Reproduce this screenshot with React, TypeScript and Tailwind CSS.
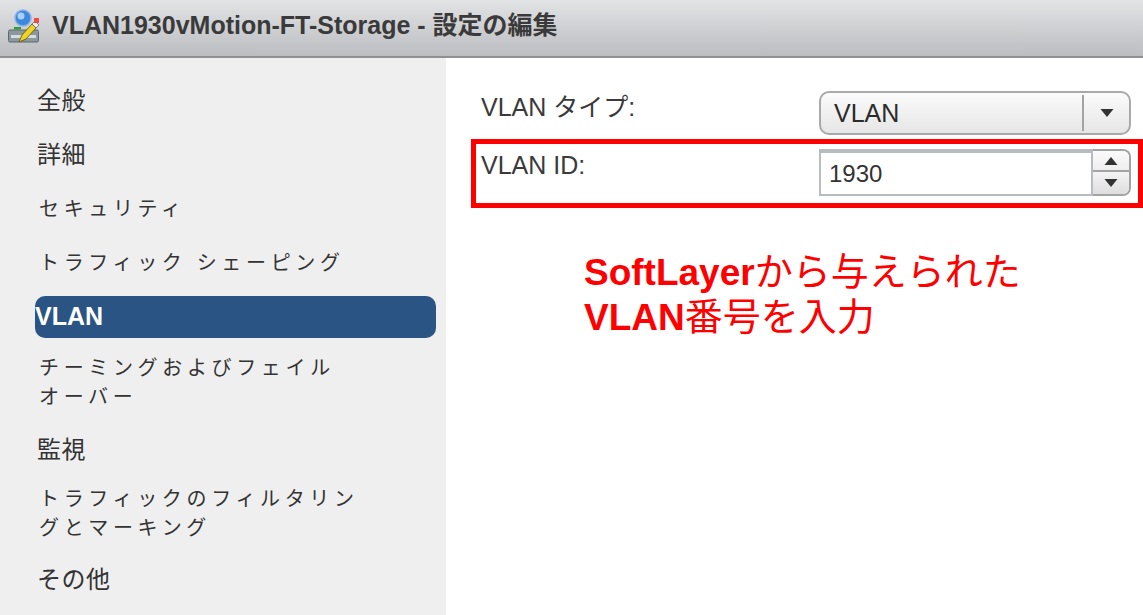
const jp = "font-['Liberation_Sans','Noto_Sans_CJK_JP',sans-serif]";

function Arrow({ up = false, className = "" }: { up?: boolean; className?: string }) {
  return (
    <svg width="14" height="10" viewBox="0 0 14 10" className={className}>
      <path d={up ? "M7 1 L13.5 9 L0.5 9 Z" : "M0.5 1 L13.5 1 L7 9 Z"} fill="#333" />
    </svg>
  );
}

function NetworkIcon() {
  return (
    <svg width="32" height="36" viewBox="0 0 32 36">
      <rect x="0.5" y="22" width="30" height="12" rx="1.5" fill="#8d979e" stroke="#5d686f" />
      <rect x="3" y="27" width="25" height="3" fill="#d7dcdf" />
      <rect x="6" y="19" width="7" height="2.5" fill="#2f9a3a" />
      <circle cx="15" cy="10" r="8" fill="#3f86df" stroke="#8ab4e6" strokeWidth="1.5" />
      <circle cx="13" cy="8" r="3.5" fill="#a9d0f7" />
      <path d="M11 34 L14 27 L24 16 L28 20 L18 31 Z" fill="#f0d320" stroke="#5b5310" strokeWidth="0.8" />
      <path d="M24 16 L27 13 L31 17 L28 20 Z" fill="#e9e9e9" stroke="#444" strokeWidth="0.6" />
      <rect x="26" y="10" width="5" height="5" fill="#ef4b4b" />
    </svg>
  );
}

function SideItem({ children, big = false, className = "" }: { children: React.ReactNode; big?: boolean; className?: string }) {
  return (
    <div
      className={`flex items-center ${big ? "pl-[2px] text-[24px] tracking-[0.5px]" : "pl-[4px] pt-[2px] text-[20px] tracking-[4.65px]"} text-[#333] ${className}`}
    >
      <span className="leading-[29px]">{children}</span>
    </div>
  );
}

export default function App() {
  return (
    <div className={`h-[615px] w-[1143px] overflow-hidden bg-white ${jp}`}>
      <header className="flex h-[58px] items-center gap-[12px] border-b-2 border-[#8f8f8f] bg-gradient-to-b from-[#e2e3e5] to-[#bcbdc0] pl-[8px] pb-[4px]">
        <NetworkIcon />
        <h1 className="text-[25px] font-bold text-[#3a3a3a]">VLAN1930vMotion-FT-Storage - 設定の編集</h1>
      </header>
      <div className="flex h-[557px]">
        <aside className="h-full w-[446px] bg-[#efefef] pt-[15px] pl-[35px]">
          <SideItem big className="h-[54px]">全般</SideItem>
          <SideItem big className="h-[54px]">詳細</SideItem>
          <SideItem className="h-[54px]">セキュリティ</SideItem>
          <SideItem className="h-[54px]">トラフィック シェーピング</SideItem>
          <div className="mt-[7px] flex h-[42px] w-[401px] items-center rounded-[10px] bg-[#2a5484] text-[25px] font-bold text-white">
            VLAN
          </div>
          <SideItem className="mt-[14px] h-[59px]">チーミングおよびフェイル<br />オーバー</SideItem>
          <SideItem big className="mt-[11px] h-[54px]">監視</SideItem>
          <SideItem className="mt-[7px] h-[59px]">トラフィックのフィルタリン<br />グとマーキング</SideItem>
          <SideItem big className="mt-[10px] h-[54px]">その他</SideItem>
        </aside>
        <main className="flex-1 pt-[33px] pl-[25px] text-[#3a3a3a]">
          <div className="flex h-[44px] pl-[10px] pr-[11px]">
            <div className="w-[338px] text-[25px] leading-[32px]">VLAN タイプ:</div>
            <div className="flex h-[44px] w-[312px] items-center rounded-[10px] border-2 border-[#a9a9a9] bg-gradient-to-b from-[#fbfbfb] to-[#e6e6e6]">
              <span className="w-[261px] pl-[13px] text-[25px] leading-none text-[#2b2b2b]">VLAN</span>
              <span className="h-[36px] w-[2px] bg-[#a3a3a3]" />
              <span className="flex flex-1 justify-center"><Arrow /></span>
            </div>
          </div>
          <div className="mt-[4px] flex h-[69px] border-[5px] border-[#ff0000] pl-[5px] pt-[5px] pr-[6px]">
            <div className="w-[338px] text-[25px] leading-[32px]">VLAN ID:</div>
            <div className="flex h-[47px] w-[312px]">
              <div className="flex w-[274px] items-center border-2 border-t-[4px] border-[#b8bcc0] bg-white pl-[8px] text-[24px] leading-none text-[#333]">1930</div>
              <div className="flex w-[38px] flex-col overflow-hidden rounded-r-[8px] border-2 border-l-0 border-[#a3a3a3]">
                <span className="flex h-[21px] items-center justify-center border-b-2 border-[#a3a3a3] bg-gradient-to-b from-[#fbfbfb] to-[#eeeeee]"><Arrow up /></span>
                <span className="flex flex-1 items-center justify-center bg-gradient-to-b from-[#f4f4f4] to-[#dedede]"><Arrow /></span>
              </div>
            </div>
          </div>
          <p className="mt-[42px] ml-[113px] text-[38px] leading-[45px] text-[#ff0000]">
            <b className="text-[37px]">SoftLayer</b>から与えられた<br />
            <b className="text-[37px]">VLAN</b>番号を入力
          </p>
        </main>
      </div>
    </div>
  );
}
